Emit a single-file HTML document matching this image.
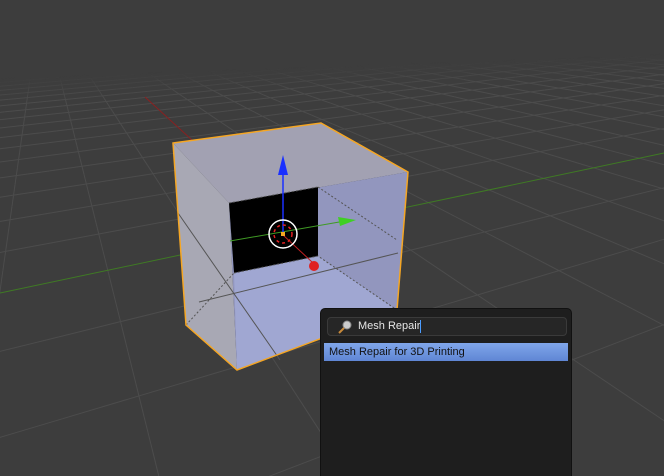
<!DOCTYPE html>
<html><head><style>
html,body{margin:0;width:664px;height:476px;overflow:hidden;background:#3d3d3d;font-family:"Liberation Sans",sans-serif}
svg{position:absolute;left:0;top:0}
#pop{position:absolute;left:320px;top:308px;width:252px;height:168px;background:#1e1e1e;border:1px solid #111;border-bottom:none;border-radius:5px 5px 0 0;box-sizing:border-box}
#sf{position:absolute;left:6px;top:8px;width:238px;height:17px;background:#262626;border:1px solid #3a3a3a;border-radius:4px;color:#e6e6e6;font-size:11px;line-height:17px}
#sf span{position:absolute;left:30px}
#hl{position:absolute;left:3px;top:34px;width:244px;height:18px;background:linear-gradient(#80a6ea,#5f86d4);color:#111;font-size:11px;line-height:18px;padding-left:5px;box-sizing:border-box}
</style></head><body>
<svg width="664" height="476" viewBox="0 0 664 476">
<g id="grid" stroke="#4c4c4c" stroke-width="1" fill="none"></g>
<path d="M0 293 L664 153" stroke="#3f7a24" stroke-width="1"/>
<path d="M145 97 L372 305" stroke="#8a2020" stroke-width="1"/>
<polygon points="173,143 321,123 408,172 229,203" fill="#a2a1b2"/>
<polygon points="173,143 229,203 237,370 186,325" fill="#a8a8b4"/>
<polygon points="229,203 408,172 397,310 237,370" fill="#9296be"/>
<polygon points="234,273 318,256 397,310 237,370" fill="#a0a7d2"/>
<polygon points="229,203 318,187 318,256 234,273" fill="#000"/>
<g stroke="#555" stroke-dasharray="2,2" stroke-width="1" fill="none">
<path d="M229 203 L318 187 M318 187 L397 240 M186 325 L234 273 M234 273 L318 256 L397 310"/>
</g>
<path d="M199 302 L398 253 M178 213 L280 360" stroke="#555" stroke-width="1"/>
<path d="M173 143 L321 123 L408 172 L397 310 L237 370 L186 325 Z" fill="none" stroke="#f5a623" stroke-width="1.5"/>
<path d="M230 241 L345 221" stroke="#3f9a24" stroke-width="1"/>
<polygon points="338,217 356,220 340,226" fill="#3fcf24"/>
<path d="M283 235 L283 165" stroke="#1a30ff" stroke-width="1.5"/>
<polygon points="283,155 278,175 288,175" fill="#1a30ff"/>
<path d="M283 235 L312 262" stroke="#c02020" stroke-width="1"/>
<circle cx="314" cy="266" r="5" fill="#e02020"/>
<circle cx="283" cy="234" r="14" fill="none" stroke="#fff" stroke-width="1.5"/>
<circle cx="283" cy="234" r="9" fill="none" stroke="#e02020" stroke-width="1.5" stroke-dasharray="3,3"/>
<rect x="281" y="232" width="4" height="4" fill="#f5a623"/>
</svg>
<div id="pop">
<div id="sf"><svg width="20" height="17" style="position:absolute;left:8px;top:0"><circle cx="11" cy="7" r="4" fill="#ccc" stroke="#888"/><path d="M8 10 L3 15" stroke="#c88a3a" stroke-width="2"/></svg><span>Mesh Repair<b style="display:inline-block;width:1px;height:13px;background:#4b9cff;vertical-align:middle"></b></span></div>
<div id="hl">Mesh Repair for 3D Printing</div>
</div>
<script>
(function(){
var a=0.0578,b=0.14,G=[1657,-57],R=[41,1],O=[287,233];
function P(u,v){var w=a*u+b*v+1;return [(a*u*G[0]+b*v*R[0]+O[0])/w,(a*u*G[1]+b*v*R[1]+O[1])/w,w];}
var N=20,g=document.getElementById('grid'),NS='http://www.w3.org/2000/svg';
function seg(f){for(var t=-N;t<N;t+=0.5){var p=f(t),q=f(t+0.5);var w=Math.max(p[2],q[2]),wn=Math.min(p[2],q[2]);if(wn<0.12||w>3.2)continue;
 var l=document.createElementNS(NS,'line');l.setAttribute('x1',p[0]);l.setAttribute('y1',p[1]);l.setAttribute('x2',q[0]);l.setAttribute('y2',q[1]);
 l.setAttribute('stroke-opacity',Math.min(1,(3.2-w)/0.8));g.appendChild(l);}}
for(var k=-N;k<=N;k++){if(k==0)continue;
 (function(k){seg(function(t){return P(k,t);});seg(function(t){return P(t,k);});})(k);}
})();
</script>
</body></html>
